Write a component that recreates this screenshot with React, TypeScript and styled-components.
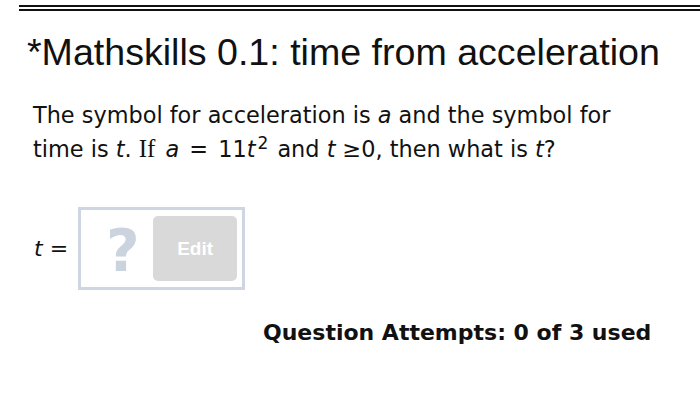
import styled, { createGlobalStyle } from "styled-components"

const GlobalStyle = createGlobalStyle`
    html, body {
        margin: 0;
        padding: 0;
        background: #fff;
    }
`

export default function App() {
    return (
        <Page>
            <GlobalStyle />
            <DoubleRule />
            <Title>*Mathskills 0.1: time from acceleration</Title>
            <Question>
                The symbol for acceleration is <Var>a</Var> and the symbol for
                <br />
                time is <Var>t</Var>. <Serif>If</Serif>
                <MathExpr><Var>a</Var> = 11<Var>t</Var><Sup>2</Sup></MathExpr>
                {" "}and <Var>t</Var> ≥0, then what is <Var>t</Var>?
            </Question>
            <AnswerRow>
                <Label><Var>t</Var> =</Label>
                <AnswerBox>
                    <Placeholder>?</Placeholder>
                    <EditButton>Edit</EditButton>
                </AnswerBox>
            </AnswerRow>
            <Attempts>Question Attempts: 0 of 3 used</Attempts>
        </Page>
    )
}

const Page = styled.div`
    width: 700px;
    height: 419px;
    padding-top: 5px;
    box-sizing: border-box;
    overflow: hidden;
    color: #111;
`
const DoubleRule = styled.div`
    margin-left: 19px;
    height: 2px;
    border-top: 2px solid #111;
    border-bottom: 2px solid #111;
`
const Title = styled.h1`
    margin: 20px 0 0 27px;
    font-family: "Liberation Sans", Arial, sans-serif;
    font-weight: 400;
    font-size: 37.6px;
    line-height: 42px;
`
const Question = styled.p`
    margin: 25px 0 0 33px;
    font-family: "DejaVu Sans", Verdana, sans-serif;
    font-size: 22.4px;
    line-height: 34px;
`
const Var = styled.i`
    font-style: italic;
`
const Serif = styled.span`
    font-family: "Liberation Serif", serif;
    font-size: 25px;
`
const MathExpr = styled.span`
    margin: 0 2px 0 10px;
    word-spacing: 3px;
`
const Sup = styled.sup`
    font-size: 17px;
    line-height: 0;
    margin-left: 2px;
`
const AnswerRow = styled.div`
    display: flex;
    align-items: center;
    gap: 10px;
    margin: 41px 0 0 34px;
`
const Label = styled.span`
    font-family: "DejaVu Sans", Verdana, sans-serif;
    font-size: 22px;
`
const AnswerBox = styled.div`
    display: flex;
    align-items: center;
    justify-content: space-between;
    width: 167px;
    height: 83px;
    box-sizing: border-box;
    border: 3px solid #cfd6e1;
    padding: 0 5px 0 25px;
`
const Placeholder = styled.span`
    font-family: "DejaVu Sans", Verdana, sans-serif;
    font-weight: 700;
    font-size: 58px;
    color: #cbd3df;
    line-height: 1;
    margin-top: 4px;
`
const EditButton = styled.div`
    display: flex;
    align-items: center;
    justify-content: center;
    width: 84px;
    height: 65px;
    border-radius: 5px;
    background: #d9d9d9;
    color: #fff;
    font-family: "Liberation Sans", Arial, sans-serif;
    font-weight: 700;
    font-size: 19px;
`
const Attempts = styled.p`
    margin: 30px 0 0 263px;
    font-family: "DejaVu Sans", Verdana, sans-serif;
    font-weight: 700;
    font-size: 22px;
`
